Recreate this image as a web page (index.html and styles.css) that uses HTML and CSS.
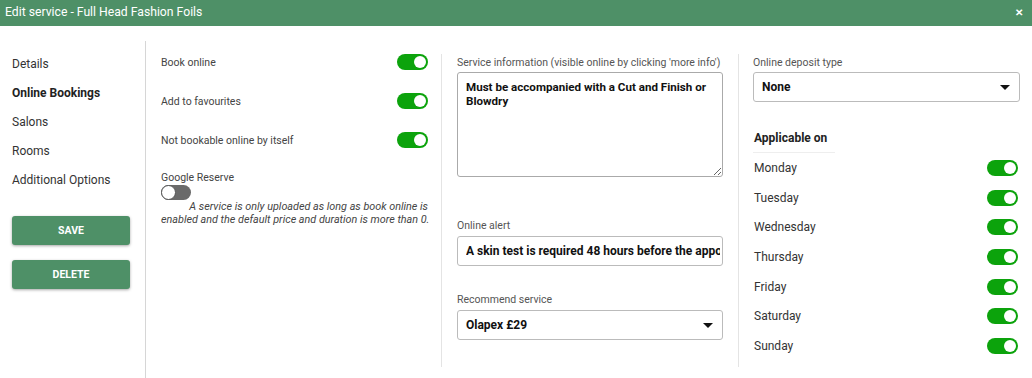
FILE: index.html
```html
<!DOCTYPE html>
<html>
<head>
<meta charset="utf-8">
<link rel="stylesheet" href="styles.css">
</head>
<body>
<div class="dialog">
  <div class="header">
    <span class="title">Edit service - Full Head Fashion Foils</span>
    <span class="close">✕</span>
  </div>
  <div class="content">
    <nav class="sidebar">
      <div class="nav-item">Details</div>
      <div class="nav-item active">Online Bookings</div>
      <div class="nav-item">Salons</div>
      <div class="nav-item">Rooms</div>
      <div class="nav-item">Additional Options</div>
      <button class="btn save">SAVE</button>
      <button class="btn delete">DELETE</button>
    </nav>

    <section class="col col-toggles">
      <div class="toggle-row">
        <span class="label">Book online</span>
        <span class="switch on"><span class="knob"></span></span>
      </div>
      <div class="toggle-row">
        <span class="label">Add to favourites</span>
        <span class="switch on"><span class="knob"></span></span>
      </div>
      <div class="toggle-row">
        <span class="label">Not bookable online by itself</span>
        <span class="switch on"><span class="knob"></span></span>
      </div>
      <div class="reserve">
        <div class="label">Google Reserve</div>
        <span class="switch off"><span class="knob"></span></span>
        <p class="note">A service is only uploaded as long as book online is<br>enabled and the default price and duration is more than 0.</p>
      </div>
    </section>

    <section class="col col-info">
      <div class="field-label">Service information (visible online by clicking 'more info')</div>
      <textarea class="textarea" readonly>Must be accompanied with a Cut and Finish or Blowdry</textarea>
      <div class="field-label alert-label">Online alert</div>
      <input class="input" type="text" readonly value="A skin test is required 48 hours before the appointment.">
      <div class="field-label rec-label">Recommend service</div>
      <div class="select"><span>Olapex £29</span><span class="caret"></span></div>
    </section>

    <section class="col col-deposit">
      <div class="field-label">Online deposit type</div>
      <div class="select"><span>None</span><span class="caret"></span></div>
      <div class="applicable">Applicable on</div>
      <div class="day-row"><span>Monday</span><span class="switch on"><span class="knob"></span></span></div>
      <div class="day-row"><span>Tuesday</span><span class="switch on"><span class="knob"></span></span></div>
      <div class="day-row"><span>Wednesday</span><span class="switch on"><span class="knob"></span></span></div>
      <div class="day-row"><span>Thursday</span><span class="switch on"><span class="knob"></span></span></div>
      <div class="day-row"><span>Friday</span><span class="switch on"><span class="knob"></span></span></div>
      <div class="day-row"><span>Saturday</span><span class="switch on"><span class="knob"></span></span></div>
      <div class="day-row"><span>Sunday</span><span class="switch on"><span class="knob"></span></span></div>
    </section>
  </div>
</div>
</body>
</html>
```

FILE: styles.css
```css
* { box-sizing: border-box; }
html, body { margin: 0; padding: 0; background: #fff; }
body {
  font-family: Roboto, "Liberation Sans", Arial, sans-serif;
  color: #333;
  width: 1032px;
  height: 378px;
  overflow: hidden;
}
.dialog { display: flex; flex-direction: column; height: 378px; }
.header {
  height: 26px;
  background: #4e9067;
  color: #fff;
  display: flex;
  align-items: center;
  justify-content: space-between;
  padding: 0 9px 2px 5px;
  flex: none;
}
.title { font-size: 12.2px; }
.close { font-size: 10px; font-weight: bold; }

.content {
  flex: 1;
  display: grid;
  grid-template-columns: 146px 296px 297px 1fr;
  padding-top: 15px;
}

.sidebar {
  border-right: 1px solid #d6d6d6;
  padding: 9px 15px 0 12px;
  display: flex;
  flex-direction: column;
  align-items: flex-start;
}
.nav-item {
  height: 29px;
  line-height: 29px;
  font-size: 12px;
  color: #333;
}
.nav-item.active { font-weight: bold; color: #222; }
.btn {
  width: 118px;
  height: 29px;
  border: none;
  border-radius: 3px;
  background: #4e9067;
  color: #fff;
  font-family: inherit;
  font-size: 10.5px;
  font-weight: bold;
  box-shadow: 0 1px 3px rgba(0,0,0,0.35);
  padding: 0;
}
.save { margin-top: 21px; }
.delete { margin-top: 15px; }

.col {
  margin-top: 13px;
  margin-bottom: 11px;
  border-right: 1px solid #e4e4e4;
}
.col-deposit { border-right: none; }

.col-toggles { padding: 0 13px 0 15px; }
.toggle-row {
  height: 16px;
  display: flex;
  align-items: center;
  justify-content: space-between;
  margin-bottom: 23px;
}
.label { font-size: 10.5px; color: #444; }
.reserve .label { line-height: 14px; }
.reserve .switch { display: block; }
.note {
  margin: 0;
  font-size: 10.8px;
  font-style: italic;
  line-height: 13px;
  color: #444;
  text-align: right;
  white-space: nowrap;
}

.switch {
  display: inline-block;
  position: relative;
  width: 31px;
  height: 16px;
  border-radius: 8px;
  flex: none;
}
.switch.on { background: #0ca30c; }
.switch.off { background: #6a6a6a; width: 30px; height: 15px; }
.switch .knob {
  position: absolute;
  border-radius: 50%;
  background: #fff;
}
.switch.on .knob { width: 12px; height: 12px; top: 2px; right: 2px; }
.switch.off .knob { width: 15px; height: 15px; top: 0; left: 0; border: 1px solid #555; }

.col-info { padding: 0 15px 0 15px; display: flex; flex-direction: column; }
.col-deposit { padding: 0 12px 0 14px; display: flex; flex-direction: column; }
.field-label {
  font-size: 10.5px;
  line-height: 14px;
  color: #555;
  margin-top: 2px;
  margin-bottom: 2px;
  white-space: nowrap;
}
.textarea {
  display: block;
  width: 266px;
  height: 105px;
  border: 1px solid #aaa;
  border-radius: 3px;
  padding: 7px 6px 7px 8px;
  font-family: inherit;
  font-size: 11.6px;
  font-weight: bold;
  line-height: 14px;
  color: #111;
  resize: vertical;
  outline: none;
}
.alert-label { margin-top: 42px; margin-bottom: 3px; }
.rec-label { margin-top: 27px; margin-bottom: 3px; }
.input {
  display: block;
  width: 266px;
  height: 30px;
  border: 1px solid #bbb;
  border-radius: 3px;
  padding: 0 2px 0 8px;
  font-family: inherit;
  font-size: 12px;
  font-weight: bold;
  color: #111;
  outline: none;
}
.select {
  height: 30px;
  border: 1px solid #bbb;
  border-radius: 3px;
  display: flex;
  align-items: center;
  justify-content: space-between;
  padding: 0 9px 0 8px;
  font-size: 12px;
  font-weight: bold;
  color: #111;
}
.col-info .select { width: 266px; }
.caret {
  width: 0;
  height: 0;
  border-left: 5px solid transparent;
  border-right: 5px solid transparent;
  border-top: 5px solid #111;
}

.applicable {
  margin-top: 28px;
  align-self: flex-start;
  font-size: 12px;
  font-weight: bold;
  color: #222;
  line-height: 16px;
  padding: 0 8px 6px 1px;
  border-bottom: 1px solid #eee;
}
.day-row {
  height: 29.7px;
  display: flex;
  align-items: center;
  justify-content: space-between;
  font-size: 12px;
  color: #333;
  padding-left: 1px;
  padding-right: 2px;
}
```
